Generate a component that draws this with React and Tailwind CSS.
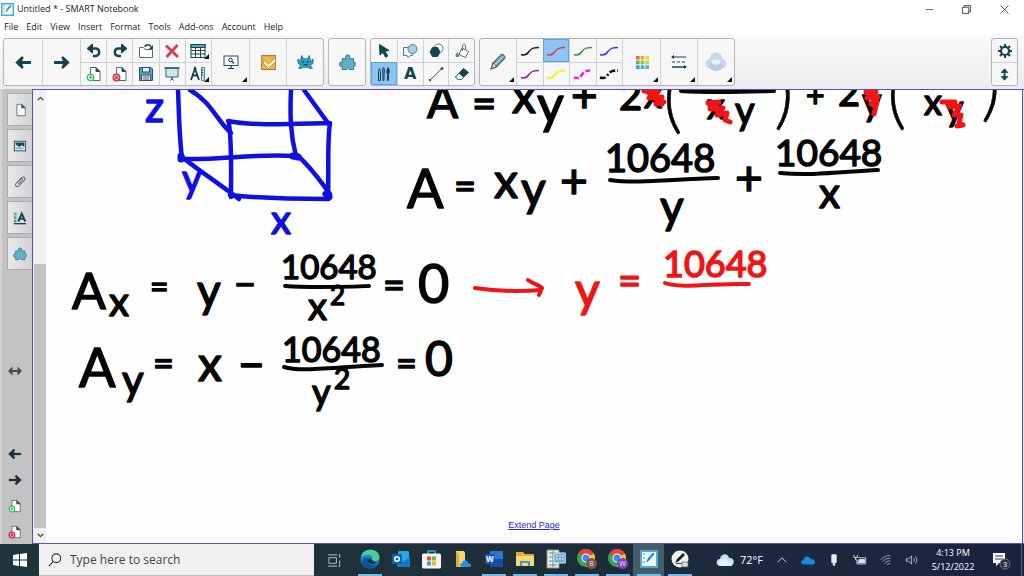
import clsx from "clsx";

const TEAL = "#134450";

const Svg = ({ size = 16, box = 16, className, children }) => (
  <svg
    width={size}
    height={size}
    viewBox={`0 0 ${box} ${box}`}
    fill="none"
    stroke={TEAL}
    strokeWidth="1"
    className={clsx("shrink-0", className)}
    aria-hidden="true"
  >
    {children}
  </svg>
);

/* ---------- Toolbar icons ---------- */

const ArrowIcon = ({ right, size = 17, color = TEAL }) => (
  <Svg size={size}>
    <g transform={right ? "rotate(180 8 8)" : undefined} stroke={color} strokeWidth="2.6">
      <path d="M15 8H3" />
      <path d="M7.5 2.8L2 8l5.5 5.2" strokeWidth="2.4" />
      <path d="M6.5 4.5L2.5 8l4 3.500z" fill={color} strokeWidth="1" />
    </g>
  </Svg>
);

const UndoIcon = ({ flip }) => (
  <Svg>
    <g transform={flip ? "matrix(-1 0 0 1 16 0)" : undefined}>
      <path d="M3 5.500h7a3.800 3.800 0 0 1 0 7.500H7" strokeWidth="2.4" />
      <path d="M6.500 1L1 5.500l5.500 4.500z" fill={TEAL} />
    </g>
  </Svg>
);

const OpenIcon = () => (
  <Svg>
    <path d="M1.500 14.500v-10h4l1.500 2h7.500v8z" fill="#fff" stroke="#4d6d78" />
    <path d="M6.500 3.500c2-2.500 5-2.500 6.500.5" strokeWidth="1.600" />
    <path d="M15 2v4h-4z" fill={TEAL} stroke="none" />
  </Svg>
);

const DeleteIcon = () => (
  <Svg>
    <path d="M2 2.500l12 11.500M13.500 2L2.500 14" stroke="#dc3a52" strokeWidth="2.800" />
  </Svg>
);

const TableIcon = () => (
  <Svg>
    <rect x="1" y="1.500" width="14" height="13" fill="#fff" />
    <rect x="1" y="1.500" width="14" height="3" fill="#5aa9c4" />
    <path d="M1 7.500h14M1 11h14M5.500 4.500v10M10.500 4.500v10" />
  </Svg>
);

const PageIcon = ({ mark, size = 16 }) => (
  <Svg size={size}>
    <path d="M4.500 1.500h5.500l4 4v9h-9.500z" fill="#fff" stroke="#526e76" />
    <path d="M10 1.500v4h4" fill="#284b55" stroke="#284b55" />
    {mark === "add" && (
      <g stroke="#35bd62">
        <circle cx="4.500" cy="11.500" r="3.200" fill="#e8ffed" strokeWidth="1.300" />
        <path d="M4.500 9.800v3.400M2.800 11.500h3.400" strokeWidth="1.200" />
      </g>
    )}
    {mark === "remove" && (
      <g stroke="#d62d4c">
        <circle cx="4.500" cy="11.500" r="3.200" fill="#ffd9df" strokeWidth="1.500" />
        <path d="M3.300 10.300l2.400 2.400M5.700 10.300l-2.400 2.400" strokeWidth="1.300" />
      </g>
    )}
  </Svg>
);

const SaveIcon = () => (
  <Svg>
    <path d="M1.500 1.500h11.500l1.500 1.500v11.500h-13z" fill="#5f9fbc" stroke="#285266" />
    <path d="M4.500 1.500h7v4.500h-7z" fill="#e2edf2" stroke="#285266" />
    <path d="M3.500 9h9v5.500h-9z" fill="#e8eef0" stroke="#285266" />
    <path d="M5 11h6M5 13h6" strokeWidth=".8" />
  </Svg>
);

const ScreenShadeIcon = () => (
  <Svg>
    <path d="M.500 2h15" strokeWidth="1.600" />
    <path d="M2 2.500h12V11H2z" fill="#cce6ef" stroke="#386477" />
    <path d="M8 11v2M6.500 14.500L8 12.500l1.500 2" />
  </Svg>
);

const MeasureIcon = () => (
  <Svg>
    <path d="M1 14L5 2.500 9 14M2.500 9.500h5" strokeWidth="1.800" />
    <circle cx="5" cy="2.500" r="1" fill={TEAL} />
    <path d="M11.500 1.500h3v13h-3z" fill="#bcdce6" stroke="#54808e" />
    <path d="M11.500 4h1.500M11.500 6.500h1.500M11.500 9h1.500" />
  </Svg>
);

const ScreenIcon = () => (
  <Svg>
    <rect x="1" y="2" width="14" height="9.500" fill="#f8fbfc" stroke="#2d5260" />
    <circle cx="7.500" cy="6" r="1.800" />
    <path d="M9 7.500l2 2M8 11.500V14M5 14.500h6" strokeWidth="1.200" />
  </Svg>
);

const CheckIcon = () => (
  <Svg size={17}>
    <path d="M1.500 1.500h13v13h-13z" fill="#efb552" stroke="#a9802d" />
    <path d="M3.500 5.500L8 9.500l6.500-6v4L8 13.500l-4.500-4z" fill="#fff3cf" stroke="#a9802d" strokeWidth=".7" />
  </Svg>
);

const MonsterIcon = () => (
  <Svg size={17}>
    <path
      d="M4.500 1.500l1.500 3h4l1.500-3 1 3.500v2h1l1-2 1 .5-1 4h-1.500v2l1.500 2h-3l-1.500-1h-4l-1.500 1H1.500l1.500-2v-2H1.500l-1-4 1-.5 1 2h1V5z"
      fill="#29a5c9"
      stroke="#176883"
      strokeWidth=".8"
    />
    <circle cx="6" cy="7.500" r=".9" fill="#0f3d4c" stroke="none" />
    <circle cx="10" cy="7.500" r=".9" fill="#0f3d4c" stroke="none" />
    <path d="M6 10h4" />
  </Svg>
);

const PuzzleIcon = ({ size = 17 }) => (
  <Svg size={size}>
    <path
      d="M3 14.500v-3.200c-1.200.7-2.500 0-2.500-1.600S1.800 7.300 3 8V4.500h3.700C5.600 2.700 6.400 1 8.200 1s2.600 1.700 1.500 3.500h4V8c2.300-.8 2.300 4.200 0 3.300v3.200h-4c0-2-2.700-2-2.700 0z"
      fill="#64afcb"
      stroke="#447f96"
    />
  </Svg>
);

const PointerIcon = () => (
  <Svg>
    <path d="M3.500 1.500l9.500 6-4 .8 2.800 4.700-2.200 1.300L7 9.500 4 12z" fill={TEAL} />
  </Svg>
);

const ShapesIcon = () => (
  <Svg>
    <path d="M1.500 4.500h9v8h-2l-2.500 2-1-2H1.500z" fill="#eef7fa" stroke="#547784" />
    <circle cx="10.500" cy="6" r="4.500" fill="#a1d2e4" stroke="#4d7c8d" />
  </Svg>
);

const PolygonIcon = () => (
  <Svg>
    <circle cx="10.500" cy="5.500" r="4.500" fill="#fff" stroke="#527580" />
    <path d="M4.500 4.500h5l2.500 4.500-2.500 4.500h-5L2 9z" fill={TEAL} />
  </Svg>
);

const FillIcon = () => (
  <Svg>
    <path d="M8 5l6.500 3.500-3 6-6.500-3z" fill="#fff" stroke="#547079" />
    <path d="M8.500 8V3c0-2.500 3-2.500 3 0v3.500" stroke="#547079" />
    <path d="M3.500 9c-3 3.500-2.500 5 0 5s2-2 0-5z" fill="#5d8895" stroke="none" />
  </Svg>
);

const PensIcon = () => (
  <Svg>
    <path d="M2.500 14.500v-9l1-3 1 3v9z" fill="#79bdda" />
    <path d="M7 14.500v-5l-.5-6 1-2 1 2-.5 6v5z" fill="#5b9dbc" />
    <path d="M11.500 14.500V8.500c-1.500-3 0-5 .5-7 1 2 2 4 .5 7v6z" fill={TEAL} />
  </Svg>
);

const LineIcon = () => (
  <Svg>
    <path d="M2 14L14 2.500" stroke="#3b5962" />
    <circle cx="2" cy="14" r="1.200" fill="#3b5962" stroke="none" />
    <circle cx="14" cy="2.500" r="1.500" fill="#3b5962" stroke="none" />
  </Svg>
);

const EraserIcon = () => (
  <Svg>
    <path d="M9.500 2.500L14.500 6.500 7 13.500H4L1.500 11z" fill={TEAL} />
    <path d="M5 7l4.500 4.500L7 13.500H4L1.500 11z" fill="#f0f8fb" stroke="#4f737d" />
  </Svg>
);

const PencilIcon = () => (
  <Svg size={18}>
    <path d="M2 14l1.500-5L11 1.500c1-1 4 1.500 3 3L7 12z" fill="#6ea8bb" stroke="#49666f" />
    <path d="M2 14l1.500-5L7 12z" fill="#e6eff2" stroke="#49666f" />
    <path d="M5 10.500L12.500 3" stroke="#c0dce4" />
  </Svg>
);

const StrokeIcon = ({ color, dash, width = 1.500 }) => (
  <svg width="20" height="12" viewBox="0 0 20 12" fill="none" aria-hidden="true">
    <path d="M1 9.500c4 1.500 6 0 8-3s4-4 10-4" stroke={color} strokeWidth={width} strokeDasharray={dash} />
  </svg>
);

const PaletteIcon = () => {
  const colors = ["#e77042", "#eda54b", "#f3d64d", "#63b659", "#8ac55a", "#b5d45e", "#4d9dd8", "#49b1ce", "#57bca7"];
  return (
    <Svg box={15} size={14}>
      {colors.map((c, i) => (
        <rect key={c} x={1 + (i % 3) * 5} y={1 + Math.floor(i / 3) * 5} width="4" height="4" fill={c} stroke="none" />
      ))}
    </Svg>
  );
};

const LineStyleIcon = () => (
  <Svg>
    <path d="M1 3h14" />
    <path d="M1 8h14" strokeDasharray="3 2" />
    <path d="M1 13h14" strokeWidth="1.500" />
    <path d="M3 1L0 3l3 2zM13 11l3 2-3 2z" fill={TEAL} stroke="none" />
  </Svg>
);

const TransparencyIcon = () => (
  <Svg size={22}>
    <g fill="#a9c6e2" opacity=".6" stroke="none">
      <circle cx="8" cy="5.500" r="4.500" />
      <circle cx="4.500" cy="9" r="4" />
      <circle cx="11.500" cy="9" r="4" />
      <ellipse cx="8" cy="11" rx="5" ry="3.500" fill="#8fb4da" />
      <ellipse cx="8" cy="8" rx="3" ry="2" fill="#e3f0fb" />
    </g>
  </Svg>
);

const GearIcon = () => (
  <Svg>
    <circle cx="8" cy="8" r="4" strokeWidth="2.200" />
    <path
      d="M8 1v3M8 12v3M1 8h3M12 8h3M3 3l2.200 2.200M10.800 10.800L13 13M13 3l-2.200 2.200M5.200 10.800L3 13"
      strokeWidth="2"
    />
  </Svg>
);

const UpDownIcon = () => (
  <Svg size={13}>
    <path d="M8 3v10" strokeWidth="2.200" />
    <path d="M8 1L4 5.500h8zM8 15l-4-4.500h8z" fill={TEAL} />
  </Svg>
);

/* ---------- Toolbar ---------- */

const ToolButton = ({ label, active, menu, className, children }) => (
  <button
    type="button"
    aria-label={label}
    className={clsx(
      "relative flex items-center justify-center border-[#d0d0d2]",
      active && "bg-[#8cc5f5] outline-1 -outline-offset-1 outline-[#5ba5e6]",
      className
    )}
  >
    {children}
    {menu && (
      <svg width="5" height="5" viewBox="0 0 5 5" className="absolute right-[2px] bottom-[3px]" aria-hidden="true">
        <path d="M5 0v5H0z" fill="#111" />
      </svg>
    )}
  </button>
);

const ToolGroup = ({ label, children }) => (
  <div
    role="group"
    aria-label={label}
    className="flex h-12 shrink-0 overflow-hidden rounded-[3px] border border-[#b4b4b6] bg-[#f7f7f8]"
  >
    {children}
  </div>
);

const pageTools = [
  { label: "Undo", icon: <UndoIcon /> },
  { label: "Redo", icon: <UndoIcon flip /> },
  { label: "Open", icon: <OpenIcon /> },
  { label: "Delete", icon: <DeleteIcon /> },
  { label: "Table", icon: <TableIcon />, menu: true },
  { label: "Add page", icon: <PageIcon mark="add" /> },
  { label: "Delete page", icon: <PageIcon mark="remove" /> },
  { label: "Save", icon: <SaveIcon /> },
  { label: "Screen shade", icon: <ScreenShadeIcon /> },
  { label: "Measurement tools", icon: <MeasureIcon />, menu: true },
];

const drawTools = [
  { label: "Select", icon: <PointerIcon /> },
  { label: "Shapes", icon: <ShapesIcon /> },
  { label: "Regular polygons", icon: <PolygonIcon /> },
  { label: "Fill", icon: <FillIcon /> },
  { label: "Pens", icon: <PensIcon />, active: true },
  { label: "Text", icon: <span className="font-['DejaVu_Sans'] text-base font-bold text-[#134450]">A</span> },
  { label: "Lines", icon: <LineIcon /> },
  { label: "Eraser", icon: <EraserIcon /> },
];

const penStyles = [
  { label: "Black pen", icon: <StrokeIcon color="#222" /> },
  { label: "Red pen", icon: <StrokeIcon color="#d2404e" />, active: true },
  { label: "Green pen", icon: <StrokeIcon color="#3a9a48" /> },
  { label: "Blue pen", icon: <StrokeIcon color="#3b3be8" /> },
  { label: "Purple pen", icon: <StrokeIcon color="#93308f" /> },
  { label: "Yellow highlighter", icon: <StrokeIcon color="#f5f04a" width={2.500} /> },
  { label: "Magenta dashes", icon: <StrokeIcon color="#f01fe0" dash="5 2" width={2.500} /> },
  { label: "Black dashes", icon: <StrokeIcon color="#111" dash="6 2 2 2" width={2.500} /> },
];

const Toolbar = () => (
  <div className="flex h-[54px] shrink-0 items-start gap-1 overflow-hidden bg-linear-to-b from-[#fafafa] to-[#ececef] pt-[3px] pr-[6px] pl-[3px]">
    <ToolGroup label="Page">
      <ToolButton label="Previous page" className="w-[38px]"><ArrowIcon /></ToolButton>
      <ToolButton label="Next page" className="w-[38px] border-l"><ArrowIcon right /></ToolButton>
      <div className="grid w-[131px] grid-cols-5 grid-rows-2">
        {pageTools.map((tool, i) => (
          <ToolButton key={tool.label} label={tool.label} menu={tool.menu} className={clsx("border-l", i > 4 && "border-t")}>
            {tool.icon}
          </ToolButton>
        ))}
      </div>
      <ToolButton label="Screen capture" menu className="w-[38px] border-l"><ScreenIcon /></ToolButton>
      <ToolButton label="Assessments" className="w-[37px] border-l"><CheckIcon /></ToolButton>
      <ToolButton label="Activities" className="w-[37px] border-l"><MonsterIcon /></ToolButton>
    </ToolGroup>

    <ToolGroup label="Add-ons">
      <ToolButton label="Add-ons" className="w-[36px]"><PuzzleIcon /></ToolButton>
    </ToolGroup>

    <ToolGroup label="Tools">
      <div className="grid w-[103px] grid-cols-4 grid-rows-2">
        {drawTools.map((tool, i) => (
          <ToolButton
            key={tool.label}
            label={tool.label}
            active={tool.active}
            className={clsx(i % 4 > 0 && "border-l", i > 3 && "border-t")}
          >
            {tool.icon}
          </ToolButton>
        ))}
      </div>
    </ToolGroup>

    <ToolGroup label="Pen options">
      <ToolButton label="Pen type" menu className="w-[36px]"><PencilIcon /></ToolButton>
      <div className="grid w-[106px] grid-cols-4 grid-rows-2">
        {penStyles.map((tool, i) => (
          <ToolButton key={tool.label} label={tool.label} active={tool.active} className={clsx("border-l", i > 3 && "border-t")}>
            {tool.icon}
          </ToolButton>
        ))}
      </div>
      <ToolButton label="Color" menu className="w-[38px] border-l"><PaletteIcon /></ToolButton>
      <ToolButton label="Line style" menu className="w-[37px] border-l"><LineStyleIcon /></ToolButton>
      <ToolButton label="Transparency" menu className="w-[37px] border-l"><TransparencyIcon /></ToolButton>
    </ToolGroup>

    <div className="ml-auto">
      <ToolGroup label="Settings">
        <div className="grid w-[25px] grid-rows-2">
          <ToolButton label="Customize toolbar"><GearIcon /></ToolButton>
          <ToolButton label="Move toolbar" className="border-t"><UpDownIcon /></ToolButton>
        </div>
      </ToolGroup>
    </div>
  </div>
);

/* ---------- Sidebar ---------- */

const PictureIcon = () => (
  <Svg size={14}>
    <rect x="1.500" y="2.500" width="13" height="11" fill="#dcebef" />
    <path d="M3 4h10v5l-3-2-3 2-4-3z" fill="#174450" stroke="none" />
    <path d="M3 9l3 1 3-1 4 2.500H3z" fill="#76b4c6" stroke="none" />
  </Svg>
);

const ClipIcon = () => (
  <Svg size={14}>
    <path d="M4 9l6-6c2.500-2 5 .5 3 3L6.500 12.500c-2.500 2-5-.5-3-3L9 4.500c1.500-1 2.500.3 1.500 1.500L6 10.500" stroke="#68686b" strokeWidth="1.200" />
  </Svg>
);

const PropertiesIcon = () => (
  <Svg size={14}>
    <path d="M1 2h3v3H1zM1 6h3v3H1z" fill="#51b365" stroke="none" />
    <path d="M1 10h3v3H1z" fill="#4a93c8" stroke="none" />
    <path d="M6 12l4-9 4 9M7.500 9h5" strokeWidth="2.200" />
    <path d="M1 14.500h14" strokeWidth="1.500" />
  </Svg>
);

const ResizeIcon = () => (
  <Svg>
    <path d="M3 8h10" stroke="#4a4a4a" strokeWidth="2" />
    <path d="M5.500 3.500L1 8l4.500 4.500zM10.500 3.500L15 8l-4.500 4.500z" fill="#4a4a4a" stroke="none" />
  </Svg>
);

const sideTabs = [
  { label: "Page sorter", icon: <PageIcon size={14} /> },
  { label: "Gallery", icon: <PictureIcon /> },
  { label: "Attachments", icon: <ClipIcon /> },
  { label: "Properties", icon: <PropertiesIcon /> },
  { label: "Add-ons panel", icon: <PuzzleIcon size={14} /> },
];

const Sidebar = () => (
  <aside className="flex w-8 shrink-0 flex-col justify-between border-l-2 border-[#d4d4d5] bg-[#c3c3c4] pt-1 pb-[5px]">
    <div className="flex flex-col gap-[3px] pl-[5px]">
      {sideTabs.map((tab) => (
        <button
          key={tab.label}
          type="button"
          aria-label={tab.label}
          className="flex h-[33px] items-center justify-center border border-r-0 border-[#ababad] bg-linear-to-r from-[#e9e9e9] to-[#d2d2d4]"
        >
          {tab.icon}
        </button>
      ))}
    </div>
    <div className="flex flex-col items-center pr-1">
      <button type="button" aria-label="Resize sidebar" className="mb-[68px]"><ResizeIcon /></button>
      <div className="flex flex-col items-center gap-3">
        <button type="button" aria-label="Go back one page"><ArrowIcon size={14} color="#12343c" /></button>
        <button type="button" aria-label="Go forward one page"><ArrowIcon right size={14} color="#12343c" /></button>
        <button type="button" aria-label="Insert page"><PageIcon mark="add" size={14} /></button>
        <button type="button" aria-label="Remove page"><PageIcon mark="remove" size={14} /></button>
      </div>
    </div>
  </aside>
);

const ScrollBar = () => (
  <div className="flex w-[13px] shrink-0 flex-col bg-[#f0f0f1] pl-px">
    <button type="button" aria-label="Scroll up" className="flex h-4 items-center justify-center">
      <Svg size={9}><path d="M3 11l5-5 5 5" stroke="#555" strokeWidth="2.500" /></Svg>
    </button>
    <div className="grow-[6]" />
    <div className="grow-[10] bg-[#c3c3c5]" />
    <button type="button" aria-label="Scroll down" className="flex h-[15px] items-center justify-center">
      <Svg size={9}><path d="M3 5l5 5 5-5" stroke="#555" strokeWidth="2.500" /></Svg>
    </button>
  </div>
);

/* ---------- Whiteboard ---------- */

// x and y are the left end of each note's baseline on the board
const notes = [
  { t: "A", x: 381, y: 28, s: 46 },
  { t: "=", x: 426, y: 28, s: 42 },
  { t: "x", x: 466, y: 23, s: 48 },
  { t: "y", x: 491, y: 33, s: 52 },
  { t: "+", x: 525, y: 22, s: 46 },
  { t: "2", x: 573, y: 20, s: 40 },
  { t: "x", x: 598, y: 18, s: 36 },
  { t: "(", x: 617, y: 34, s: 76, thin: true },
  { t: "x", x: 661, y: 29, s: 36 },
  { t: "y", x: 689, y: 34, s: 38 },
  { t: ")", x: 728, y: 30, s: 76, thin: true },
  { t: "+", x: 760, y: 17, s: 32 },
  { t: "2", x: 792, y: 16, s: 38 },
  { t: "y", x: 816, y: 25, s: 38 },
  { t: "(", x: 841, y: 30, s: 76, thin: true },
  { t: "x", x: 878, y: 25, s: 36 },
  { t: "y", x: 899, y: 31, s: 36 },
  { t: ")", x: 935, y: 22, s: 76, thin: true },

  { t: "A", x: 361, y: 118, s: 54 },
  { t: "=", x: 408, y: 110, s: 38 },
  { t: "x", x: 448, y: 108, s: 48 },
  { t: "y", x: 475, y: 116, s: 48 },
  { t: "+", x: 514, y: 108, s: 48 },
  { t: "10648", x: 559, y: 82, s: 38 },
  { t: "y", x: 614, y: 133, s: 46 },
  { t: "+", x: 689, y: 105, s: 48 },
  { t: "10648", x: 729, y: 76, s: 37 },
  { t: "x", x: 773, y: 118, s: 42 },

  { t: "A", x: 26, y: 219, s: 50 },
  { t: "x", x: 63, y: 226, s: 40 },
  { t: "=", x: 104, y: 208, s: 32 },
  { t: "y", x: 151, y: 217, s: 46 },
  { t: "−", x: 188, y: 208, s: 38 },
  { t: "10648", x: 235, y: 189, s: 33 },
  { t: "x", x: 262, y: 230, s: 38 },
  { t: "2", x: 284, y: 215, s: 26 },
  { t: "=", x: 337, y: 209, s: 38 },
  { t: "0", x: 372, y: 213, s: 54 },

  { t: "A", x: 33, y: 297, s: 54 },
  { t: "y", x: 76, y: 305, s: 42 },
  { t: "=", x: 107, y: 286, s: 36 },
  { t: "x", x: 152, y: 291, s: 48 },
  { t: "−", x: 192, y: 291, s: 46 },
  { t: "10648", x: 236, y: 272, s: 34 },
  { t: "y", x: 266, y: 315, s: 36 },
  { t: "2", x: 288, y: 299, s: 28 },
  { t: "=", x: 350, y: 286, s: 36 },
  { t: "0", x: 379, y: 286, s: 48 },

  { t: "y", x: 529, y: 217, s: 48, ink: "red" },
  { t: "=", x: 572, y: 205, s: 40, ink: "red" },
  { t: "10648", x: 617, y: 187, s: 36, ink: "red" },

  { t: "z", x: 99, y: 32, s: 42, ink: "blue" },
  { t: "y", x: 136, y: 102, s: 38, ink: "blue" },
  { t: "x", x: 225, y: 144, s: 40, ink: "blue" },
];

const INK = { black: "#050505", red: "#f01414", blue: "#1010e4" };

const Ink = () => (
  <svg
    className="pointer-events-none absolute inset-0 h-full w-full"
    fill="none"
    strokeWidth="4"
    strokeLinecap="round"
    strokeLinejoin="round"
  >
    {/* box sketch */}
    <g stroke={INK.blue} strokeWidth="4.500">
      <path d="M132 0c1 20 1 45 4 68" />
      <path d="M144 0c18 10 26 27 36 38l5 5" />
      <path d="M182 31c25 5 60 3 102 2-3 20-1 46-2 73" />
      <path d="M183 34c3 21 2 46 2 73" />
      <path d="M135 66c14 12 33 24 58 43" />
      <path d="M138 69c40 1 72-6 112-3" />
      <path d="M245 0c-1 24-1 43 5 66" />
      <path d="M258 0l24 33M251 65c14 12 24 27 33 39" />
      <path d="M184 105c35 4 70 4 98 4" />
      <path d="M247 66l5 1M280 104l3 3M135 66v3" strokeWidth="7" />
    </g>

    {/* written notes */}
    <g className="font-[Lato,sans-serif]">
      {notes.map((n, i) => {
        const color = INK[n.ink || "black"];
        return (
          <text
            key={i}
            x={n.x}
            y={n.y}
            fontSize={n.s}
            fontWeight={n.thin ? 300 : 400}
            fill={color}
            stroke={color}
            strokeWidth={n.thin ? 0.5 : 1.500}
          >
            {n.t}
          </text>
        );
      })}
    </g>

    {/* fraction bars */}
    <g stroke={INK.black}>
      <path d="M635 1c30 2 60 1 93 0" />
      <path d="M564 90c28 4 62-1 108-2" />
      <path d="M734 83c30 3 60-1 98-3" />
      <path d="M239 196c28 2 54 1 84 0" />
      <path d="M238 277c16 5 40 1 98-2" />
    </g>

    {/* cancelled factors */}
    <g stroke={INK.red} strokeWidth="5">
      <path d="M598 1l14 1-9 6 13-1-6 7 8-2M602 2l14 12" />
      <path d="M662 13l11-1-9 7 13-1-6 7 10-2-2 7 5 2M664 16l16 9" />
      <path d="M820 2l10 0-9 6 11-1-7 7 6-2-3 12" />
      <path d="M896 12h13l-6 5 11-1-6 9 7 0-2 8 4 2-6 1" />
    </g>

    <g stroke={INK.red}>
      <path d="M429 198c20 3 40 4 66 2M482 190c5 4 10 4 14 8l-3 7" />
      <path d="M619 193c16 6 52 0 84 1" />
    </g>
  </svg>
);

const Board = () => (
  <main className="relative flex grow flex-col items-center justify-end overflow-hidden border-r border-[#5b4fc8] bg-[#fefefe] pb-3">
    <Ink />
    <a href="#extend" className="relative font-['Liberation_Sans',sans-serif] text-[9px] leading-3 text-[#2727d8] underline">
      Extend Page
    </a>
  </main>
);

/* ---------- Taskbar ---------- */

const EdgeIcon = () => (
  <Svg size={20} box={20}>
    <circle cx="10" cy="10" r="9.500" fill="#1686d2" stroke="none" />
    <path d="M1 8C3-2 19-1 19.500 8c.3 4-5 5-7.500 3 2-5-5-7-11-3z" fill="#48ce9b" stroke="none" />
    <path d="M8 10c-1 5 4 7 9 5-4 6-14 6-15-2 1-5 5-5 6-3z" fill="#0c529e" stroke="none" />
    <path d="M12 11c-2-3-5-1-4 2 1 2 6 3 10 0-1 0-4 1-6-2z" fill="#1d3038" stroke="none" />
  </Svg>
);

const OutlookIcon = () => (
  <Svg size={18} box={18}>
    <rect x="6" y="1" width="11" height="13" rx="1" fill="#2aa5e8" stroke="none" />
    <path d="M5 8l6 4 7-5v10H5z" fill="#1479c9" stroke="none" />
    <rect x="0" y="4" width="10" height="10" rx="1" fill="#0c63b4" stroke="none" />
    <circle cx="5" cy="9" r="2.300" stroke="#fff" strokeWidth="1.500" />
  </Svg>
);

const StoreIcon = () => (
  <Svg size={19} box={19}>
    <path d="M6 5V1h7v4" stroke="#42a8db" strokeWidth="1.500" />
    <rect x="0" y="3.500" width="19" height="15" rx="1.500" fill="#f5f5f5" stroke="none" />
    <g stroke="none">
      <path d="M5 6.500h4v4H5z" fill="#e94e32" />
      <path d="M10 6.500h4v4h-4z" fill="#79b832" />
      <path d="M5 11.500h4v4H5z" fill="#2e9fe0" />
      <path d="M10 11.500h4v4h-4z" fill="#f3b52b" />
    </g>
  </Svg>
);

const OneDriveFolderIcon = () => (
  <Svg size={18} box={18}>
    <path d="M2 1h8l1 2v14H2z" fill="#f8d477" stroke="none" />
    <path d="M2 1l3 3v13H2z" fill="#dfa842" stroke="none" />
    <path d="M8 17c-3-1-2-4 0-4 1-4 6-3 6 0 4 0 4 4 1 4z" fill="#2794e4" stroke="none" />
  </Svg>
);

const WordIcon = () => (
  <Svg size={18} box={18}>
    <rect x="5" y="1" width="13" height="16" rx="1" fill="#2b78d0" stroke="none" />
    <path d="M5 9h13v8H5z" fill="#174d9e" stroke="none" />
    <rect x="0" y="4" width="10" height="10" rx="1" fill="#1a56b2" stroke="none" />
    <text x="1" y="12" fontSize="8" fontWeight="700" fill="#fff" stroke="none">W</text>
  </Svg>
);

const ExplorerIcon = () => (
  <Svg size={18} box={18}>
    <path d="M0 2h7l2 2h9v12H0z" fill="#e2a83c" stroke="none" />
    <path d="M0 6h18v10H0z" fill="#f8d775" stroke="none" />
    <path d="M4 16v-5h10v5h-2v-3H6v3z" fill="#4598cf" stroke="none" />
  </Svg>
);

const KeyboardAppIcon = () => (
  <Svg size={20} box={20}>
    <path d="M1 1h12v18H1z" fill="#e9ecec" stroke="#83908f" />
    <path d="M3 4h8M3 8h8M3 12h8M3 16h8M7 2v16" stroke="#6e8585" />
    <rect x="8" y="4" width="12" height="10" rx="1" fill="#72add3" stroke="#d7e8f0" />
    <path d="M10 7h8M10 10h8" stroke="#e8f5fa" strokeDasharray="2 1" />
  </Svg>
);

const ChromeIcon = ({ letter, badge }) => (
  <Svg size={20} box={20}>
    <g stroke="none">
      <circle cx="9" cy="9" r="9" fill="#35a852" />
      <path d="M9 9L1.200 4.500A9 9 0 0 1 16.800 4.500z" fill="#e84335" />
      <path d="M9 9l7.800-4.500A9 9 0 0 1 9 18z" fill="#f9bc15" />
      <circle cx="9" cy="9" r="4.500" fill="#fff" />
      <circle cx="9" cy="9" r="3.500" fill="#4285f4" />
      <circle cx="14.500" cy="14.500" r="5.500" fill={badge} />
      <text x="14.500" y="17" textAnchor="middle" fontSize="7" fill="#eee">{letter}</text>
    </g>
  </Svg>
);

const NotebookIcon = ({ size = 18 }) => (
  <Svg size={size} box={18}>
    <rect x="1" y="1" width="16" height="16" fill="#eef9fe" stroke="#48a9d6" strokeWidth="2" />
    <path d="M4 3v12" stroke="#6c8791" strokeDasharray="2 2" />
    <path d="M7 12l1-3 5-6 1 1-5 6z" fill="#268ab7" stroke="#268ab7" />
  </Svg>
);

const InkAppIcon = () => (
  <Svg size={18} box={18}>
    <circle cx="9" cy="9" r="8.500" fill="#f3f3f3" stroke="none" />
    <path d="M4 13l2-4 6-6 2 2-6 6z" fill="#222" stroke="none" />
    <path d="M5 14c3-2 5 1 7-1" stroke="#333" />
    <rect x="11" y="12" width="6" height="5" fill="#ddd" stroke="#555" strokeWidth=".7" />
  </Svg>
);

const apps = [
  { label: "Edge", icon: <EdgeIcon />, open: true },
  { label: "Outlook", icon: <OutlookIcon /> },
  { label: "Store", icon: <StoreIcon /> },
  { label: "OneDrive folder", icon: <OneDriveFolderIcon /> },
  { label: "Word", icon: <WordIcon />, open: true },
  { label: "File Explorer", icon: <ExplorerIcon />, open: true },
  { label: "SMART Keyboard", icon: <KeyboardAppIcon />, open: true },
  { label: "Chrome", icon: <ChromeIcon letter="B" badge="#79554a" />, open: true },
  { label: "Chrome work", icon: <ChromeIcon letter="W" badge="#7e42ba" />, open: true },
  { label: "SMART Notebook", icon: <NotebookIcon />, open: true, active: true },
  { label: "SMART Ink", icon: <InkAppIcon />, open: true },
];

const trayIcons = [
  { label: "Show hidden icons", icon: <path d="M3 10.500l5-5 5 5" /> },
  { label: "OneDrive", icon: <path d="M4 13c-5 0-5-5-1-5 0-5 7-5 8-1 5-1 7 6 2 6z" fill="#168be0" stroke="none" /> },
  { label: "Microphone", icon: <path d="M5.500 2h5v9h-5zM7 12h2v2H7z" fill="#e9eef0" stroke="#e9eef0" /> },
  {
    label: "Battery",
    icon: (
      <>
        <path d="M6 5.500h8.500v7H4.500V8" />
        <path d="M7 7.500h6v3.500H6z" fill="#dce2e7" />
        <path d="M1 2v3h4V2M3 5v3h2" />
      </>
    ),
  },
  {
    label: "Wi-Fi",
    icon: <path d="M2 8c3-4 7-5 11-5M4 10c2-3 5-4 9-4M6 12c2-2 4-3 7-3M9 13l4-1" stroke="#aab3bd" />,
  },
  { label: "Volume", icon: <path d="M1.500 6.500H4l3.500-3v9L4 9.500H1.500zM10 6c1 1 1 3 0 4M12 4c2 3 2 5 0 8" stroke="#c3cbd3" /> },
];

const Taskbar = () => (
  <footer className="flex h-8 shrink-0 items-stretch overflow-hidden bg-linear-to-r from-[#20363d] via-[#1d2e38] to-[#1a2340] font-['Open_Sans',sans-serif] text-white">
    <button type="button" aria-label="Start" className="flex w-[39px] shrink-0 items-center justify-center">
      <Svg size={14} box={14}>
        <path d="M0 2l6-1v5.500H0zM7 1l7-1v6.500H7zM0 7.500h6V13l-6-1zM7 7.500h7V14l-7-1z" fill="#fff" stroke="none" />
      </Svg>
    </button>
    <label className="flex w-[275px] items-center gap-2 border-b border-[#bdbdbd] bg-[#f0f0f0] pl-[9px]">
      <Svg size={14}>
        <circle cx="9.500" cy="6" r="5" stroke="#333" strokeWidth="1.300" />
        <path d="M6 9.500L1 15" stroke="#333" strokeWidth="1.300" />
      </Svg>
      <input
        type="text"
        aria-label="Search"
        placeholder="Type here to search"
        className="w-full min-w-0 bg-transparent text-[12px] text-[#333] outline-none placeholder:text-[#444]"
      />
    </label>
    <button type="button" aria-label="Task view" className="flex w-[40px] shrink-0 items-center justify-center">
      <Svg size={15}>
        <path d="M2 5h8v6H2zM1 2h10M1 14h10M13.500 1v4M13.500 8v7" stroke="#c2c9cb" />
      </Svg>
    </button>
    <nav aria-label="Apps" className="flex shrink-0">
      {apps.map((app) => (
        <button
          key={app.label}
          type="button"
          aria-label={app.label}
          className={clsx("flex w-[31px] flex-col items-center", app.active && "bg-[#465c66]")}
        >
          <span className="flex grow items-center">{app.icon}</span>
          <span className={clsx("h-[2px] w-6", app.open && "bg-[#76b9ed]")} />
        </button>
      ))}
    </nav>

    <div className="ml-auto flex shrink-0 items-center">
      <button type="button" className="mr-[6px] flex items-center gap-[6px] text-[11px]">
        <Svg size={18} box={18}>
          <path d="M4 15c-5-1-4-7 0-7 1-6 8-6 9-1 6-1 6 7 2 8z" fill="#c8e2f5" stroke="none" />
          <path d="M3 14c-2-3 1-5 3-4 2-3 6-2 6 1 3 0 4 2 3 4H4z" fill="#e5f4ff" stroke="none" />
        </Svg>
        72°F
      </button>
      {trayIcons.map((item) => (
        <button key={item.label} type="button" aria-label={item.label} className="flex w-[26px] justify-center">
          <Svg size={14}>
            <g stroke="#e2e7ea">{item.icon}</g>
          </Svg>
        </button>
      ))}
      <div className="w-[56px] text-center text-[9px] leading-[14px]">
        <div>4:13 PM</div>
        <div>5/12/2022</div>
      </div>
      <button type="button" aria-label="3 notifications" className="flex w-10 items-center justify-center">
        <Svg size={20} box={20}>
          <path d="M2 3h12v10H8l-3 3v-3H2z" fill="#fff" stroke="none" />
          <path d="M4 6h8M4 9h8" stroke="#26334a" />
          <circle cx="14" cy="14" r="5" fill="#282f3c" stroke="#6d7580" />
          <text x="14" y="17" textAnchor="middle" fontSize="8" fill="#fff" stroke="none">3</text>
        </Svg>
      </button>
      <span className="h-8 w-[3px] border-l border-[#596174]" />
    </div>
  </footer>
);

/* ---------- Window ---------- */

const menus = ["File", "Edit", "View", "Insert", "Format", "Tools", "Add-ons", "Account", "Help"];

const App = () => (
  <div className="flex h-screen flex-col overflow-hidden bg-white font-['Open_Sans',sans-serif] text-[9px] text-[#222]">
    <header className="flex h-[18px] shrink-0 items-center gap-[3px] pl-[1px]">
      <NotebookIcon size={13} />
      <h1>Untitled * - SMART Notebook</h1>
      <div className="ml-auto flex">
        <button type="button" aria-label="Minimize" className="flex w-[37px] justify-center">
          <Svg size={9}><path d="M1 8h14" stroke="#555" strokeWidth="1.500" /></Svg>
        </button>
        <button type="button" aria-label="Restore" className="flex w-[37px] justify-center">
          <Svg size={9}><path d="M1 4h11v11H1zM4 4V1h11v11h-3" stroke="#333" strokeWidth="1.500" /></Svg>
        </button>
        <button type="button" aria-label="Close" className="flex w-[39px] justify-center">
          <Svg size={9}><path d="M1 1l14 14M15 1L1 15" stroke="#444" strokeWidth="1.500" /></Svg>
        </button>
      </div>
    </header>
    <nav aria-label="Menu" className="flex h-[17px] shrink-0 items-center gap-2 pl-1">
      {menus.map((menu) => (
        <button key={menu} type="button">{menu}</button>
      ))}
    </nav>
    <Toolbar />
    <div className="flex min-h-0 grow">
      <Sidebar />
      <div className="flex min-w-0 grow border-y border-l border-[#5b4fc8]">
        <ScrollBar />
        <Board />
        <div className="w-px bg-[#e4e4ee]" />
      </div>
    </div>
    <Taskbar />
  </div>
);

export default App;
